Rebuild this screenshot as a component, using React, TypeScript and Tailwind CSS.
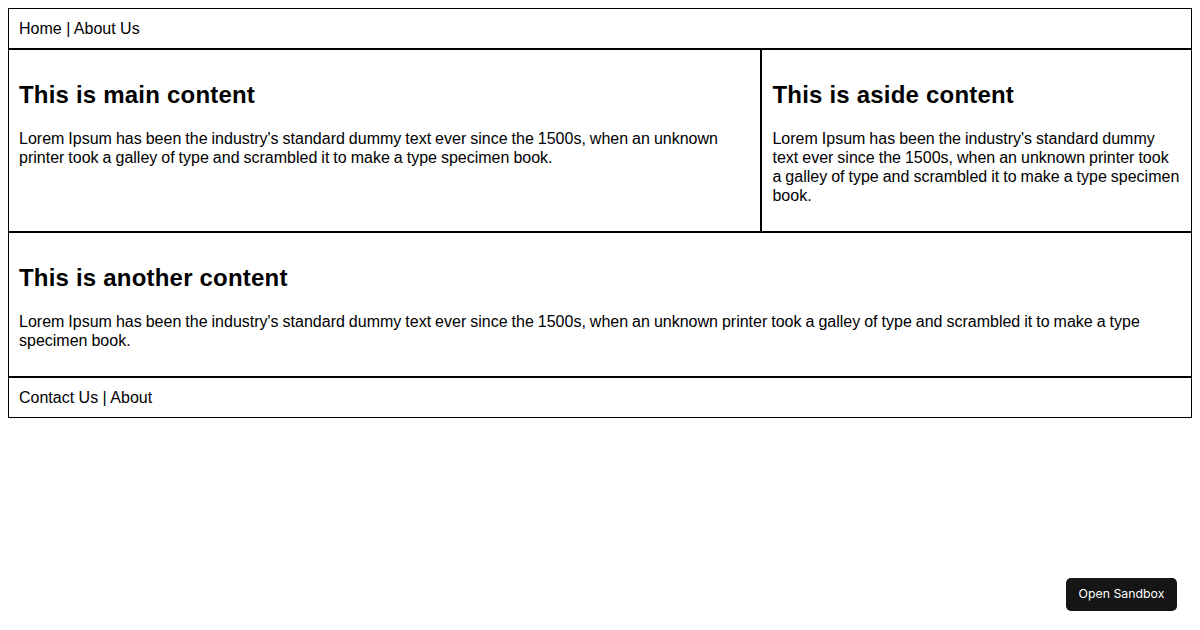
import React from 'react';

const lorem =
    "Lorem Ipsum has been the industry's standard dummy text ever since the 1500s, when an unknown printer took a galley of type and scrambled it to make a type specimen book.";

const Section: React.FC<{ title: string; className?: string }> = ({ title, className = '' }) => (
    <section className={`border border-black p-[10px] ${className}`}>
        <h2 className="my-[19.92px] text-[24px] leading-[29px] font-bold tracking-[0.2px]">{title}</h2>
        <p className="my-4 leading-[19px] [word-spacing:-0.45px]">{lorem}</p>
    </section>
);

const App: React.FC = () => {
    return (
        <div className="min-h-[630px] bg-white p-2 font-['Liberation_Sans',Arial,sans-serif] text-base text-black">
            <div className="grid grid-cols-[7fr_4fr]">
                <header className="col-span-2 border border-black p-[10px] leading-[19px]">
                    <span>Home</span> | <span>About Us</span>
                </header>

                <Section title="This is main content" />
                <Section title="This is aside content" />
                <Section title="This is another content" className="col-span-2" />

                <footer className="col-span-2 border border-black p-[10px] leading-[19px]">
                    <span>Contact Us</span> | <span>About</span>
                </footer>
            </div>

            <button className="fixed right-[23px] bottom-[19px] h-[33px] w-[111px] rounded-[5px] bg-[#151515] font-['Inter',sans-serif] text-[12.3px] text-white">
                Open Sandbox
            </button>
        </div>
    );
};

export default App;
